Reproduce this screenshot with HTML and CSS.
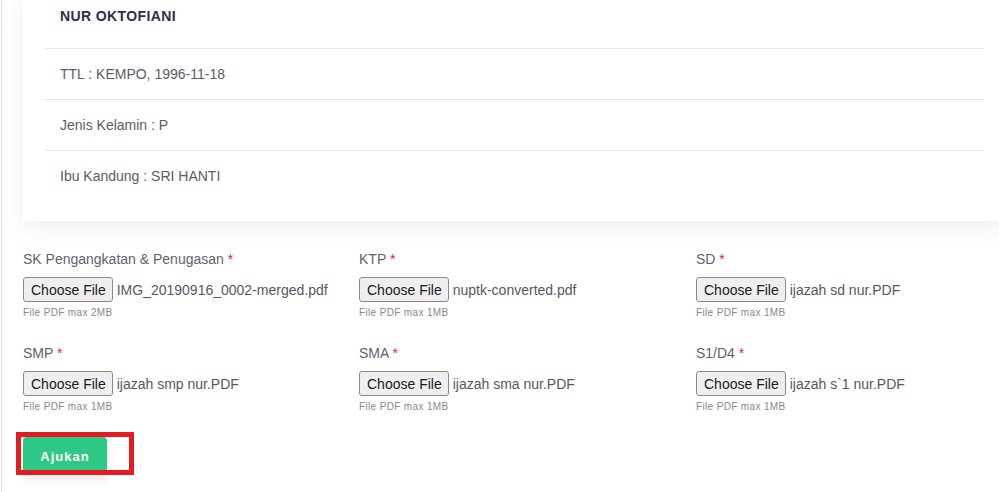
FILE: index.html
```html
<!DOCTYPE html>
<html lang="id">
<head>
<meta charset="utf-8">
<title>Pengajuan</title>
<link rel="stylesheet" href="styles.css">
</head>
<body>
<div class="page">
  <div class="card">
    <div class="name-row">NUR OKTOFIANI</div>
    <ul class="list">
      <li>TTL : KEMPO, 1996-11-18</li>
      <li>Jenis Kelamin : P</li>
      <li>Ibu Kandung : SRI HANTI</li>
    </ul>
  </div>

  <form class="upload-form">
    <div class="grid">
      <div class="field">
        <label class="label">SK Pengangkatan &amp; Penugasan <span class="req">*</span></label>
        <div class="file"><span class="file-btn">Choose File</span><span class="file-name">IMG_20190916_0002-merged.pdf</span></div>
        <small class="hint">File PDF max 2MB</small>
      </div>
      <div class="field">
        <label class="label">KTP <span class="req">*</span></label>
        <div class="file"><span class="file-btn">Choose File</span><span class="file-name">nuptk-converted.pdf</span></div>
        <small class="hint">File PDF max 1MB</small>
      </div>
      <div class="field">
        <label class="label">SD <span class="req">*</span></label>
        <div class="file"><span class="file-btn">Choose File</span><span class="file-name">ijazah sd nur.PDF</span></div>
        <small class="hint">File PDF max 1MB</small>
      </div>
      <div class="field">
        <label class="label">SMP <span class="req">*</span></label>
        <div class="file"><span class="file-btn">Choose File</span><span class="file-name">ijazah smp nur.PDF</span></div>
        <small class="hint">File PDF max 1MB</small>
      </div>
      <div class="field">
        <label class="label">SMA <span class="req">*</span></label>
        <div class="file"><span class="file-btn">Choose File</span><span class="file-name">ijazah sma nur.PDF</span></div>
        <small class="hint">File PDF max 1MB</small>
      </div>
      <div class="field">
        <label class="label">S1/D4 <span class="req">*</span></label>
        <div class="file"><span class="file-btn">Choose File</span><span class="file-name">ijazah s`1 nur.PDF</span></div>
        <small class="hint">File PDF max 1MB</small>
      </div>
    </div>
    <div class="submit-wrap">
      <button type="button" class="btn-submit">Ajukan</button>
      <span class="highlight"></span>
    </div>
  </form>
</div>
</body>
</html>
```

FILE: styles.css
```css
html, body {
  margin: 0;
  padding: 0;
  background: #ffffff;
  overflow: hidden;
  font-family: "Liberation Sans", Arial, sans-serif;
}

.page {
  width: 1040px;
  height: 492px;
  border-left: 1px solid #dcdde3;
  margin-left: 1px;
  box-sizing: border-box;
  padding-left: 21px;
}

.card {
  width: 982px;
  box-sizing: border-box;
  padding: 0 21px 20px;
  background: #ffffff;
  box-shadow: 0 4px 22px 0 rgba(58, 59, 69, 0.09);
}

.name-row {
  height: 48px;
  box-sizing: border-box;
  padding: 6px 16px 0;
  font-size: 14px;
  line-height: 20px;
  font-weight: bold;
  letter-spacing: 0.4px;
  color: #2f2d4d;
}

.list {
  list-style: none;
  margin: 0;
  padding: 0;
}

.list li {
  border-top: 1px solid #e6e7ec;
  height: 50px;
  padding: 0 16px;
  font-size: 14px;
  line-height: 50px;
  color: #5a5c69;
}

.upload-form {
  margin-top: 28px;
}

.grid {
  display: grid;
  grid-template-columns: 336px 337px 337px;
  row-gap: 24px;
}

.field {
  display: flex;
  flex-direction: column;
  align-items: flex-start;
}

.label {
  font-size: 14px;
  line-height: 20px;
  color: #5f6170;
  margin-bottom: 8px;
}

.req {
  color: #d62a36;
}

.file {
  display: flex;
  align-items: center;
  height: 25px;
}

.file-btn {
  display: flex;
  align-items: center;
  box-sizing: border-box;
  height: 25px;
  padding: 0 6px 0 7px;
  background: #efefef;
  border: 1px solid #8a8a8a;
  border-radius: 3px;
  font-size: 14px;
  color: #1a1a1a;
}

.file-name {
  margin-left: 4px;
  font-size: 14px;
  color: #555762;
}

.hint {
  margin-top: 4px;
  font-size: 10px;
  line-height: 13px;
  letter-spacing: 0.35px;
  color: #858796;
}

.submit-wrap {
  position: relative;
  margin-top: 24px;
  width: 112px;
  height: 36px;
}

.btn-submit {
  display: block;
  width: 84px;
  height: 36px;
  border: none;
  border-radius: 4px;
  background: #2ec886;
  color: #ffffff;
  font-family: "Liberation Sans", Arial, sans-serif;
  font-size: 13px;
  font-weight: bold;
  letter-spacing: 1px;
  box-shadow: 0 5px 10px rgba(58, 59, 69, 0.15);
  padding: 2px 0 0;
}

.highlight {
  position: absolute;
  left: -7px;
  top: -5px;
  width: 118px;
  height: 43px;
  box-sizing: border-box;
  border: 5px solid #e31b23;
  pointer-events: none;
}
```
